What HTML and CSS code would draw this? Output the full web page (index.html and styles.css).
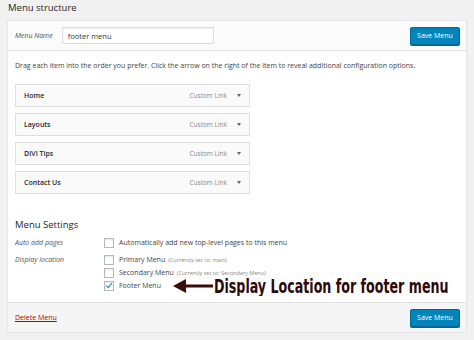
FILE: index.html
```html
<!DOCTYPE html>
<html lang="en">
<head>
    <meta charset="UTF-8">
    <title>Menus</title>
    <link rel="stylesheet" href="styles.css">
</head>
<body>

    <h2 class="page-title">Menu structure</h2>

    <div class="menu-panel">
        <!-- header with name + save -->
        <div class="menu-header">
            <label class="menu-name">
                <span class="field-label">Menu Name</span>
                <input type="text" value="footer menu">
            </label>
            <button class="save-btn">Save Menu</button>
        </div>

        <div class="menu-body">
            <p class="drag-hint">Drag each item into the order you prefer. Click the arrow on the right of the item to reveal additional configuration options.</p>

            <ul class="menu-items">
                <li class="menu-item"><span class="item-title">Home</span><span class="item-type">Custom Link</span><span class="item-arrow"></span></li>
                <li class="menu-item"><span class="item-title">Layouts</span><span class="item-type">Custom Link</span><span class="item-arrow"></span></li>
                <li class="menu-item"><span class="item-title">DIVI Tips</span><span class="item-type">Custom Link</span><span class="item-arrow"></span></li>
                <li class="menu-item"><span class="item-title">Contact Us</span><span class="item-type">Custom Link</span><span class="item-arrow"></span></li>
            </ul>

            <h3 class="settings-title">Menu Settings</h3>

            <div class="setting-row">
                <span class="field-label setting-label">Auto add pages</span>
                <div class="setting-options">
                    <label class="check"><span class="box"></span>Automatically add new top-level pages to this menu</label>
                </div>
            </div>

            <div class="setting-row">
                <span class="field-label setting-label">Display location</span>
                <div class="setting-options">
                    <label class="check"><span class="box"></span>Primary Menu <small>(Currently set to: main)</small></label>
                    <label class="check"><span class="box"></span>Secondary Menu <small>(Currently set to: Secondary Menu)</small></label>
                    <label class="check footer-check">
                        <span class="box checked">
                            <svg viewBox="0 0 10 10" width="9" height="9"><path d="M1.5 5.2 L4 7.6 L8.6 2" fill="none" stroke="#1e8cbe" stroke-width="1.4"/></svg>
                        </span>Footer Menu
                        <!-- annotation pasted over the screenshot -->
                        <span class="callout">
                            <svg class="callout-arrow" viewBox="0 0 40 14" width="40" height="14"><path d="M0 7 L13 0 L13 5.4 L40 5.4 L40 8.6 L13 8.6 L13 14 Z" fill="#3b0c0c"/></svg>
                            <span class="callout-text">Display Location for footer menu</span>
                        </span>
                    </label>
                </div>
            </div>
        </div>

        <div class="menu-footer">
            <a href="#" class="delete-link">Delete Menu</a>
            <button class="save-btn">Save Menu</button>
        </div>
    </div>

</body>
</html>
```

FILE: styles.css
```css
/* WP menu editor */
body {
    margin: 0;
    padding: 0 7px;
    background-color: #f1f1f1;
    font-family: 'Open Sans', 'Noto Sans', sans-serif;
    color: #333;
}

.page-title {
    margin: 0;
    height: 20px;
    line-height: 15px;
    padding-left: 1px;
    font-size: 9.5px;
    font-weight: 400;
    color: #23282d;
}

.menu-panel {
    background-color: #fff;
    border: 1px solid #e5e5e5;
    box-shadow: 0 1px 1px rgba(0, 0, 0, 0.04);
    width: 458px;
}

.menu-header {
    display: flex;
    justify-content: space-between;
    align-items: center;
    height: 29px;
    padding: 0 6px 0 7px;
    background-color: #fbfbfb;
    border-bottom: 1px solid #e2e2e2;
}

.menu-name {
    display: flex;
    align-items: center;
}

.field-label {
    font-style: italic;
    font-size: 7px;
    color: #555;
}

.menu-name input {
    margin-left: 9px;
    width: 140px;
    height: 15px;
    padding: 0 5px;
    border: 1px solid #ddd;
    box-shadow: inset 0 1px 2px rgba(0, 0, 0, 0.07);
    font-family: inherit;
    font-size: 7.5px;
    color: #32373c;
}

.save-btn {
    width: 50px;
    height: 18px;
    padding: 0;
    background-color: #0085ba;
    border: 1px solid #006799;
    border-radius: 2px;
    color: #fff;
    font-family: inherit;
    font-size: 7px;
    box-shadow: 0 1px 0 #006799;
}

.menu-body {
    padding: 9px 7px 0;
}

.drag-hint {
    margin: 0 0 12px;
    font-size: 7px;
    line-height: 12px;
    color: #444;
}

.menu-items {
    list-style: none;
    margin: 0;
    padding: 0;
}

.menu-item {
    display: flex;
    align-items: center;
    width: 233px;
    height: 21px;
    margin-bottom: 6px;
    padding: 0;
    background-color: #fafafa;
    border: 1px solid #dfdfdf;
}

.item-title {
    flex: 1;
    padding-left: 8px;
    font-size: 7px;
    font-weight: 600;
    color: #23282d;
}

.item-type {
    font-size: 6.5px;
    color: #888;
}

.item-arrow {
    width: 0;
    height: 0;
    margin: 0 8px 0 10px;
    border-left: 2.5px solid transparent;
    border-right: 2.5px solid transparent;
    border-top: 3px solid #666;
}

.settings-title {
    margin: 24px 0 5px;
    height: 13px;
    line-height: 13px;
    font-size: 9.5px;
    font-weight: 400;
    color: #23282d;
}

.setting-row {
    display: flex;
    margin-bottom: 4px;
}

.setting-label {
    flex: none;
    width: 89px;
    line-height: 13px;
}

.setting-options {
    display: flex;
    flex-direction: column;
    align-items: flex-start;
}

.check {
    display: flex;
    align-items: center;
    height: 13px;
    font-size: 7px;
    color: #444;
    white-space: nowrap;
}

.check small {
    margin-left: 3px;
    font-size: 5.5px;
    color: #888;
}

.box {
    display: flex;
    align-items: center;
    justify-content: center;
    width: 8px;
    height: 8px;
    margin-right: 5px;
    border: 1px solid #b4b9be;
    background-color: #fff;
    box-shadow: inset 0 1px 2px rgba(0, 0, 0, 0.1);
}

.footer-check {
    position: relative;
}

.callout {
    position: absolute;
    left: 100%;
    top: -3px;
    display: flex;
    align-items: center;
    width: 280px;
    overflow: hidden;
    margin-left: 12px;
}

.callout-arrow {
    display: block;
    flex: none;
}

.callout-text {
    display: inline-block;
    flex: none;
    margin-left: 1px;
    font-family: 'DejaVu Sans Condensed', 'DejaVu Sans', sans-serif;
    font-weight: bold;
    font-size: 19px;
    line-height: 20px;
    color: #2b0a0a;
    transform: scaleX(0.74);
    transform-origin: left center;
}

.menu-footer {
    display: flex;
    justify-content: space-between;
    align-items: center;
    margin-top: 10px;
    height: 29px;
    padding: 0 6px 0 7px;
    background-color: #f5f5f5;
    border-top: 1px solid #e2e2e2;
}

.delete-link {
    font-size: 7px;
    color: #a00;
}
```
